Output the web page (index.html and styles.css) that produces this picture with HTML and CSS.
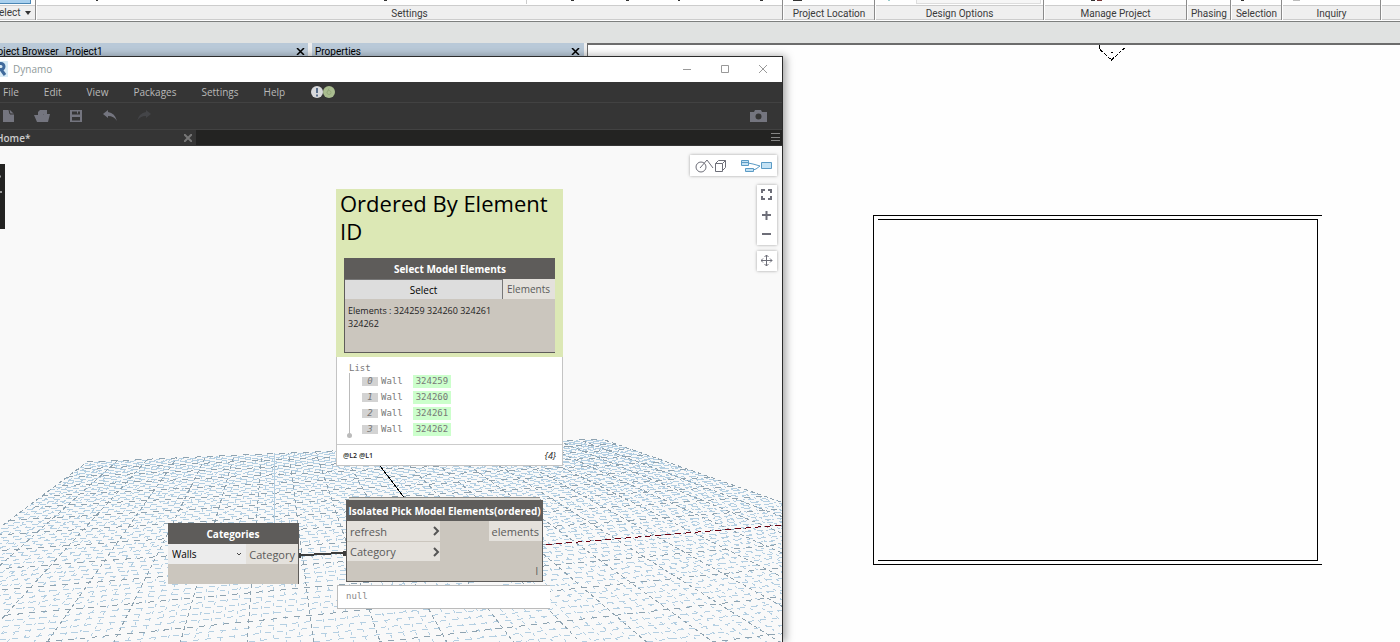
FILE: index.html
```html
<!DOCTYPE html>
<html lang="en">

<head>
    <meta charset="UTF-8">
    <meta name="viewport" content="width=device-width, initial-scale=1.0">
    <title>Dynamo</title>
    <link rel="stylesheet" href="styles.css">
</head>

<body>
    <div class="desktop">
        <!-- Ribbon -->
        <div class="ribbon">
            <div class="panel">
                <div class="panel-tools"><span class="tool-active"></span></div>
                <button class="panel-label">Select <span class="caret"></span></button>
            </div>
            <div class="panel">
                <div class="panel-tools">
                    <svg class="marks" width="740" height="5"><path d="M60 0h2M348 0h3M535 0h3M590 0h3M642 0h2M724 0h3" stroke="#333" stroke-width="2" /><path d="M490.500 0v4" stroke="#ccc" /></svg>
                </div>
                <div class="panel-label">Settings</div>
            </div>
            <div class="panel">
                <div class="panel-tools"><svg class="marks" width="80" height="5"><path d="M10 0h9" stroke="#333" stroke-width="2" /></svg></div>
                <div class="panel-label">Project Location</div>
            </div>
            <div class="panel">
                <div class="panel-tools"><svg class="marks" width="30" height="5"><path d="M13 0h2" stroke="#9cc" stroke-width="2" /></svg><span class="tool-combo"></span></div>
                <div class="panel-label">Design Options</div>
            </div>
            <div class="panel">
                <div class="panel-tools"><svg class="marks" width="80" height="5"><path d="M47 0h4" stroke="#333" stroke-width="2" /><path d="M53 0h5" stroke="#733" stroke-width="2" /></svg></div>
                <div class="panel-label">Manage Project</div>
            </div>
            <div class="panel">
                <div class="panel-tools"></div>
                <div class="panel-label">Phasing</div>
            </div>
            <div class="panel">
                <div class="panel-tools"><svg class="marks" width="30" height="5"><path d="M10 0h3" stroke="#333" stroke-width="2" /></svg></div>
                <div class="panel-label">Selection</div>
            </div>
            <div class="panel">
                <div class="panel-tools"><svg class="marks" width="30" height="5"><path d="M11 0h7" stroke="#bbb" stroke-width="2" /></svg></div>
                <div class="panel-label">Inquiry</div>
            </div>
            <div class="panel">
                <div class="panel-tools"></div>
                <div class="panel-label"></div>
            </div>
        </div>
        <div class="options-bar"></div>

        <!-- Docked palettes and the plan view -->
        <div class="workspace">
            <div class="dock dock-browser">
                <div class="dock-title"><span>Project Browser</span><span class="dock-file">Project1</span>
                    <button class="dock-close" aria-label="Close"><svg width="9" height="7"><path d="M1 0l7 7M8 0l-7 7" /></svg></button>
                </div>
            </div>
            <div class="dock dock-props">
                <div class="dock-title"><span>Properties</span>
                    <button class="dock-close" aria-label="Close"><svg width="9" height="7"><path d="M1 0l7 7M8 0l-7 7" /></svg></button>
                </div>
            </div>
            <div class="plan-view">
                <svg class="plan" width="812" height="597" fill="none" stroke="#000" shape-rendering="crispEdges">
                    <path d="M733.500 170.500h-448v349h448" />
                    <path d="M290 174.500h439.500v341h-439.500" />
                    <path d="M511.500 0v4l12 11l13 -12" stroke-dasharray="4 1" />
                    <path d="M523 7.500h2" />
                </svg>
            </div>
        </div>

        <!-- Dynamo window -->
        <div class="window">
            <div class="titlebar">
                <svg class="app-icon" width="16" height="16"><rect width="16" height="16" fill="#d9ecf6" /><path d="M5 14V2.500h4a3 3 0 0 1 0 6H5M9 8.500l4 5.500" fill="none" stroke="#3f6a9c" stroke-width="3" /></svg>
                <span class="app-name">Dynamo</span>
                <button class="win-btn" aria-label="Minimize"><svg width="10" height="10"><path d="M1 5.500h8" /></svg></button>
                <button class="win-btn" aria-label="Maximize"><svg width="10" height="10"><path d="M1.500 1.500h7v7h-7z" /></svg></button>
                <button class="win-btn" aria-label="Close window"><svg width="10" height="10"><path d="M1 1l8 8M9 1l-8 8" /></svg></button>
            </div>
            <div class="menubar">
                <button>File</button>
                <button>Edit</button>
                <button>View</button>
                <button>Packages</button>
                <button>Settings</button>
                <button>Help</button>
                <svg class="status" width="26" height="14"><circle cx="7" cy="7" r="6" fill="#d8d9db" /><path d="M7 3v5M7 9.500v2" stroke="#5a6f8c" stroke-width="2" /><circle cx="19" cy="7" r="6" fill="#a9bc8f" /><path d="M17 7.500a2 2 0 1 0 4 0a2 2 0 1 0 -4 0l2 -4" fill="none" stroke="#95aa7b" /></svg>
            </div>
            <div class="toolbar">
                <button aria-label="New"><svg width="16" height="14"><path d="M3 1h7l4 4v8H3z" /><path d="M9 1l1 4h4" fill="none" stroke="#353535" /></svg></button>
                <button aria-label="Open"><svg width="16" height="14"><path d="M4 6V3l2 -2h7v4h-3l-1 1z" /><path d="M0 6h9l1 -1h6l-2 8H3z" /></svg></button>
                <button aria-label="Save"><svg width="16" height="14"><path fill-rule="evenodd" d="M2 1h12v12H2zM4 2.500v3h8v-3h-2v2h-1v-2zM4 8v3.500h8V8z" /></svg></button>
                <button aria-label="Undo"><svg width="16" height="14"><path d="M1 5l5 -4v2q7 1 9 9q-3 -5 -9 -5v2z" /></svg></button>
                <button class="disabled" aria-label="Redo"><svg width="16" height="14"><path d="M15 5l-5 -4v2q-7 1 -9 9q3 -5 9 -5v2z" /></svg></button>
                <button class="camera" aria-label="Export image"><svg width="18" height="14"><path d="M1 3h4l1 -2h6l1 2h5v10H1z" /><circle cx="9.500" cy="7.500" r="3" fill="#353535" /></svg></button>
            </div>
            <div class="tabs">
                <div class="tab"><span>Home*</span>
                    <button aria-label="Close tab"><svg width="8" height="8"><path d="M0 0l8 8M8 0l-8 8" stroke="#777" stroke-width="2" /></svg></button>
                </div>
                <button class="tab-menu" aria-label="Tabs"><svg width="9" height="9"><path d="M0 .5h9M0 4.500h9M0 7.500h9" stroke="#858585" /></svg></button>
            </div>

            <div class="canvas">
                <svg class="scene" id="scene" width="795" height="497" viewBox="-12 146 795 497" fill="none" shape-rendering="crispEdges"></svg>
                <div class="library-handle"><svg width="5" height="20"><path d="M0 2.500h1M0 18h2" stroke="#999" stroke-width="2" /></svg></div>

                <!-- Group with a note title -->
                <div class="group">
                    <div class="group-title">Ordered By Element ID</div>
                    <div class="node node-select">
                        <div class="node-head">Select Model Elements</div>
                        <div class="node-row">
                            <button class="select-btn">Select</button>
                            <span class="port port-out">Elements</span>
                        </div>
                        <div class="node-text">Elements : 324259 324260 324261 324262</div>
                    </div>
                </div>
                <div class="watch">
                    <div class="watch-body">
                        <div class="watch-root">List</div>
                        <ul class="watch-list">
                            <li><i>0</i><span>Wall</span><b>324259</b></li>
                            <li><i>1</i><span>Wall</span><b>324260</b></li>
                            <li><i>2</i><span>Wall</span><b>324261</b></li>
                            <li><i>3</i><span>Wall</span><b>324262</b></li>
                        </ul>
                    </div>
                    <div class="watch-foot"><span>@L2 @L1</span><em>{4}</em></div>
                </div>

                <div class="node node-pick">
                    <div class="node-head">Isolated Pick Model Elements(ordered)</div>
                    <div class="node-ports">
                        <div class="ports-in">
                            <span class="port">refresh <svg width="7" height="10"><path d="M1 1l4 4l-4 4" /></svg></span>
                            <span class="port">Category <svg width="7" height="10"><path d="M1 1l4 4l-4 4" /></svg></span>
                        </div>
                        <span class="port port-out">elements</span>
                    </div>
                    <div class="lacing">l</div>
                </div>
                <div class="preview">null</div>

                <div class="node node-categories">
                    <div class="node-head">Categories</div>
                    <div class="node-row">
                        <div class="combo">
                            <select aria-label="Category">
                                <option>Walls</option>
                            </select>
                            <svg width="6" height="5"><path d="M1 1l2 2l2 -2" /></svg>
                        </div>
                        <span class="port port-out">Category</span>
                    </div>
                </div>

                <!-- View controls -->
                <div class="view-controls">
                    <div class="view-switch">
                        <button aria-label="3D preview"><svg width="32" height="14" fill="none" stroke="#6d6e78"><circle cx="6" cy="8" r="5" /><path d="M5 9L12 1l6 8M20.500 4.500h7v8h-7zM20.500 4.500l3 -3h7v7l-3 3M27.500 4.500l3 -3" /></svg></button>
                        <button aria-label="Graph view"><svg width="32" height="14" fill="#c4e2f4" stroke="#5b9bc5"><path d="M8 4l5 1l7 2M13 11l3 -1l4 -3" fill="none" /><path d="M1.500 1.500h7v5h-7zM1.500 3.500h7M5.500 9.500h8v3h-8zM21.500 3.500h10v6h-10z" /></svg></button>
                    </div>
                    <div class="view-zoom">
                        <button aria-label="Fit"><svg width="12" height="12"><path d="M1 4V1h3M7 1h3v3M10 7v3H7M4 10H1V7" /></svg></button>
                        <button aria-label="Zoom in"><svg width="12" height="12"><path d="M1 6h9M5.500 2v9" /></svg></button>
                        <button aria-label="Zoom out"><svg width="12" height="12"><path d="M1 5h9" /></svg></button>
                    </div>
                    <div class="view-pan">
                        <button aria-label="Pan"><svg class="thin" width="12" height="12"><path d="M0 5.500h11M5.500 0v11M3.500 2l2 -2l2 2M3.500 9l2 2l2 -2M2 3.500l-2 2l2 2M9 3.500l2 2l-2 2" /></svg></button>
                    </div>
                </div>
            </div>
        </div>
    </div>

    <script src="scene.js"></script>
</body>

</html>
```

FILE: styles.css
```css
body {
    margin: 0;
    background: #fefefe;
    font-family: "Open Sans", "Noto Sans", sans-serif;
    font-size: 10px;
    overflow: hidden;
}

button {
    margin: 0;
    padding: 0;
    border: none;
    background: none;
    font: inherit;
    color: inherit;
}

svg {
    display: block;
}

/* the desktop runs a little past the left edge of the screen */
.desktop {
    position: relative;
    display: flex;
    flex-direction: column;
    height: 100vh;
    margin-left: -12px;
    overflow: hidden;
}

/* Ribbon */
.ribbon {
    display: grid;
    grid-template-columns: 48px 747px 92px 169px 143px 44px 51px 99px 1fr;
    height: 21px;
    background: #fefefe;
    border-bottom: 1px solid #7d7f7e;
    font-family: Roboto, sans-serif;
    color: #3a3a3a;
}

.panel {
    height: 20px;
    box-sizing: border-box;
    border-right: 1px solid #8b8b8b;
    display: flex;
    flex-direction: column;
}

.panel:last-child {
    border-right: none;
}

.panel-tools {
    display: flex;
    height: 5px;
    overflow: hidden;
}

.panel-label {
    height: 15px;
    box-sizing: border-box;
    margin-left: 1px;
    border-top: 1px solid #ccc;
    border-bottom: 1px solid #ccc;
    background: #efefef;
    line-height: 15px;
    text-align: center;
}

button.panel-label {
    display: flex;
    align-items: center;
    padding-left: 4px;
    gap: 5px;
}

.caret {
    border: 3px solid transparent;
    border-top: 4px solid #333;
    border-bottom: none;
}

.tool-active {
    width: 42px;
    height: 3px;
    background: #a9d0ee;
    border-right: 1px solid #4a86b4;
    border-bottom: 1px solid #4a86b4;
}

.tool-combo {
    width: 123px;
    height: 3px;
    margin-left: auto;
    margin-right: 2px;
    border: 1px solid #ddd;
    border-top: none;
    background: #f6f6f6;
}

.options-bar {
    height: 21px;
    background: #e0e2e1;
}

/* Docked palettes */
.workspace {
    display: flex;
    flex: 1;
    background: #eee;
}

.dock-browser {
    width: 320px;
    margin-right: 4px;
}

.dock-props {
    width: 272px;
    margin-right: 3px;
}

.dock-title {
    display: flex;
    align-items: center;
    height: 17px;
    padding: 0 4px 0 3px;
    background: #b9c9d8;
    font-family: Roboto, sans-serif;
    color: #000;
}

.dock-browser .dock-title {
    padding: 0 3px 0 0;
}

.dock-file {
    margin-left: 7px;
}

.dock-close {
    margin-left: auto;
}

.dock-close svg {
    stroke: #000;
    stroke-width: 1.5;
}

.plan-view {
    flex: 1;
    border-top: 2px solid #6c6c6c;
    border-left: 1px solid #6c6c6c;
    background: #fefefe;
    overflow: hidden;
}

/* Dynamo window */
.window {
    position: absolute;
    top: 56px;
    bottom: 0;
    left: 0;
    width: 794px;
    display: flex;
    flex-direction: column;
    border-top: 1px solid #2b2b2b;
    border-right: 1px solid #2b2b2b;
    background: #fff;
    box-shadow: 3px 0 8px rgba(0, 0, 0, 0.35);
}

.titlebar {
    display: flex;
    align-items: center;
    height: 23px;
    padding: 0 14px 2px 4px;
}

.app-name {
    margin-left: 5px;
    margin-right: auto;
    color: #8f9a9a;
}

.win-btn {
    margin-left: 28px;
}

.win-btn svg {
    fill: none;
    stroke: #999;
}

.menubar {
    display: flex;
    align-items: center;
    gap: 25px;
    height: 20px;
    padding-left: 15px;
    background: #353535;
    border-bottom: 1px solid #424242;
    color: #b9b9b9;
}

.toolbar {
    display: flex;
    align-items: center;
    gap: 18px;
    height: 26px;
    padding: 0 15px 0 12px;
    background: #353535;
    border-bottom: 1px solid #424242;
}

.toolbar svg {
    fill: #74757f;
}

.toolbar .disabled svg {
    fill: #444548;
}

.toolbar .camera {
    margin-left: auto;
}

.tabs {
    display: flex;
    align-items: stretch;
    height: 15px;
    background: #232322;
    border-bottom: 1px solid #353535;
}

.tab {
    display: flex;
    align-items: center;
    justify-content: space-between;
    width: 196px;
    padding-left: 8px;
    padding-right: 4px;
    background: #353535;
    color: #ccc;
    font-weight: 600;
}

.tab-menu {
    margin-left: auto;
    padding-right: 2px;
}

/* Graph canvas: nodes sit at their own places */
.canvas {
    position: relative;
    flex: 1;
    background: #f9f9f9;
    overflow: hidden;
}

.scene,
.library-handle,
.group,
.watch,
.node-pick,
.preview,
.node-categories,
.view-controls {
    position: absolute;
}

.scene {
    top: 0;
    left: 0;
}

.library-handle {
    top: 18px;
    left: 12px;
    width: 5px;
    height: 55px;
    padding-top: 10px;
    background: #232322;
}

.node {
    background: #cbc6be;
    border-right: 1px solid #5e5c5a;
    color: #5a5a5a;
}

.node-head {
    height: 21px;
    background: #5e5c5a;
    color: #fff;
    font-weight: 700;
    line-height: 23px;
    text-align: center;
    white-space: nowrap;
}

.node-row,
.node-ports {
    display: flex;
    justify-content: space-between;
    align-items: flex-start;
}

.port {
    display: flex;
    align-items: center;
    justify-content: space-between;
    height: 20px;
    padding: 0 3px;
    background: #e4e1dc;
    font-size: 11px;
}

.port svg {
    fill: none;
    stroke: #555;
    stroke-width: 2;
}

.group {
    top: 43px;
    left: 348px;
    width: 227px;
    height: 168px;
    background: #dce8b5;
}

.group-title {
    height: 69px;
    padding: 0 4px;
    color: #000;
    font-size: 22px;
    line-height: 28px;
}

.node-select {
    margin: 0 8px;
    border-left: 1px solid #5e5c5a;
    border-right: none;
    border-bottom: 1px solid #5e5c5a;
}

.select-btn {
    flex: 1;
    height: 20px;
    border-top: 1px solid #777;
    border-right: 1px solid #777;
    background: #ddd;
    color: #000;
}

.node-select .port {
    padding: 0 5px 0 4px;
    font-size: 10px;
    line-height: 20px;
}

.node-text {
    height: 48px;
    width: 160px;
    padding: 5px 3px 0;
    color: #222;
    font-size: 9px;
    line-height: 13px;
}

.watch {
    top: 211px;
    left: 348px;
    width: 225px;
    border: 1px solid #c4c4c4;
    border-top: none;
    background: #fff;
    color: #777;
    font-family: "DejaVu Sans Mono", monospace;
    font-size: 9px;
}

.watch-body {
    height: 81px;
    padding: 6px 12px 0;
    border-bottom: 1px solid #ccc;
}

.watch-root {
    height: 10px;
    line-height: 10px;
}

.watch-list {
    position: relative;
    margin: 0;
    padding: 0 0 0 12px;
    height: 62px;
    border-left: 1px solid #bbb;
    list-style: none;
}

.watch-list::after {
    content: "";
    position: absolute;
    left: -3px;
    bottom: -3px;
    width: 5px;
    height: 5px;
    border-radius: 50%;
    background: #bbb;
}

.watch-list li {
    display: flex;
    align-items: center;
    height: 16px;
}

.watch-list i {
    width: 16px;
    height: 9px;
    margin-right: 3px;
    background: #d3d3d3;
    line-height: 9px;
    text-align: center;
}

.watch-list b {
    height: 13px;
    margin-left: 10px;
    padding: 0 3px;
    background: #ccffcc;
    font-weight: 400;
    line-height: 13px;
}

.watch-foot {
    display: flex;
    align-items: center;
    justify-content: space-between;
    height: 20px;
    padding: 0 6px;
    color: #222;
    font-family: "Open Sans", "Noto Sans", sans-serif;
}

.watch-foot span {
    font-size: 7px;
    font-weight: 600;
}

.node-pick {
    top: 354px;
    left: 358px;
    width: 195px;
    height: 81px;
    border-left: 1px solid #5e5c5a;
    border-bottom: 1px solid #5e5c5a;
}

/* second card peeking out behind the node */
.node-pick::before {
    content: "";
    position: absolute;
    top: -3px;
    left: 2px;
    right: 2px;
    height: 2px;
    border-top: 1px solid #8f8f8c;
    background: #dcdad4;
}

.ports-in {
    display: flex;
    flex-direction: column;
    width: 93px;
}

.ports-in .port {
    padding: 0 0 0 3px;
}

.ports-in .port + .port {
    height: 19px;
    border-top: 1px solid #cbc6be;
}

.lacing {
    padding-right: 4px;
    line-height: 20px;
    text-align: right;
}

.preview {
    top: 439px;
    left: 349px;
    width: 204px;
    height: 22px;
    padding-left: 8px;
    border: 1px solid #bbb;
    border-right: none;
    background: #fff;
    color: #888;
    font-family: "DejaVu Sans Mono", monospace;
    font-size: 9px;
    line-height: 20px;
}

.node-categories {
    top: 377px;
    left: 180px;
    width: 130px;
    height: 61px;
}

.combo {
    display: flex;
    align-items: center;
    flex: 1;
    height: 20px;
    padding-right: 4px;
    background: #ececec;
}

.combo select {
    flex: 1;
    padding: 0 0 0 4px;
    border: none;
    background: none;
    color: #000;
    font: inherit;
    appearance: none;
}

.combo svg {
    fill: none;
    stroke: #444;
}

.view-controls {
    top: 9px;
    right: 5px;
    display: flex;
    flex-direction: column;
    align-items: flex-end;
}

.view-switch,
.view-zoom,
.view-pan {
    display: flex;
    background: #fff;
    box-shadow: 0 0 3px rgba(0, 0, 0, 0.35);
}

.view-switch {
    gap: 13px;
    height: 21px;
    padding: 0 5px;
    margin-bottom: 9px;
}

.view-zoom {
    flex-direction: column;
    align-items: center;
    justify-content: space-around;
    width: 20px;
    height: 60px;
    margin-bottom: 6px;
}

.view-pan {
    align-items: center;
    justify-content: center;
    width: 20px;
    height: 20px;
}

.view-zoom svg,
.view-pan svg {
    fill: none;
    stroke: #6d6e78;
    stroke-width: 2;
}

.view-pan .thin {
    stroke-width: 1;
}
```

FILE: scene.js
```javascript
var scene = document.getElementById('scene');

// Ground plane in perspective: u runs to the right, v runs away from the viewer
function project(u, v) {
    var w = 1 + 0.1636 * u + 0.82 * v;
    return [
        (446 + 0.1636 * u * 3206 + 0.82 * v * 272) / w,
        (553 + 0.1636 * u * 323 + 0.82 * v * 323) / w
    ];
}

function addPath(d, color, dash, width, offset) {
    var path = document.createElementNS('http://www.w3.org/2000/svg', 'path');
    path.setAttribute('d', d);
    path.setAttribute('stroke', color);
    path.setAttribute('stroke-width', width || 1);
    if (dash) {
        path.setAttribute('stroke-dasharray', dash);
        path.setAttribute('stroke-dashoffset', offset || 0);
    }
    scene.appendChild(path);
}

function segment(a, b) {
    return 'M' + a[0].toFixed(1) + ' ' + a[1].toFixed(1) + 'L' + b[0].toFixed(1) + ' ' + b[1].toFixed(1);
}

// Grid lines, every fifth one is darker
var near = 0.6;
for (var pass = 0; pass < 2; pass++) {
    for (var i = -50; i <= 50; i++) {
        var major = i % 5 === 0;
        if (major !== (pass === 1)) {
            continue;
        }
        var t = i / 50;
        var color = major ? '#8ea3b1' : '#b4cfe2';
        var offset = (i + 50) * 7 % 10;
        var vStart = Math.max(-1, (near - 1 - 0.1636 * t) / 0.82);
        addPath(segment(project(t, vStart), project(t, 1)), color, major ? '4 3' : '3 5', 1, offset);
        var uStart = Math.max(-1, (near - 1 - 0.82 * t) / 0.1636);
        if (uStart < 1) {
            addPath(segment(project(uStart, t), project(1, t)), color, '6 6', 1, offset);
        }
    }
}

// Axes
addPath('M274.500 453V523', '#b4cfe2');
addPath(segment(project(0, 0), project(0, 0.8)), '#000');
addPath(segment(project(0, 0), project(1, 0)), '#6b0010', '6 4');

// Wire between the two nodes
addPath('M299 555C315 555 330 553 346 553', '#3c3c3c', '', 2);
addPath('M299 555h2M343 553h4', '#3c3c3c', '', 5);
```
